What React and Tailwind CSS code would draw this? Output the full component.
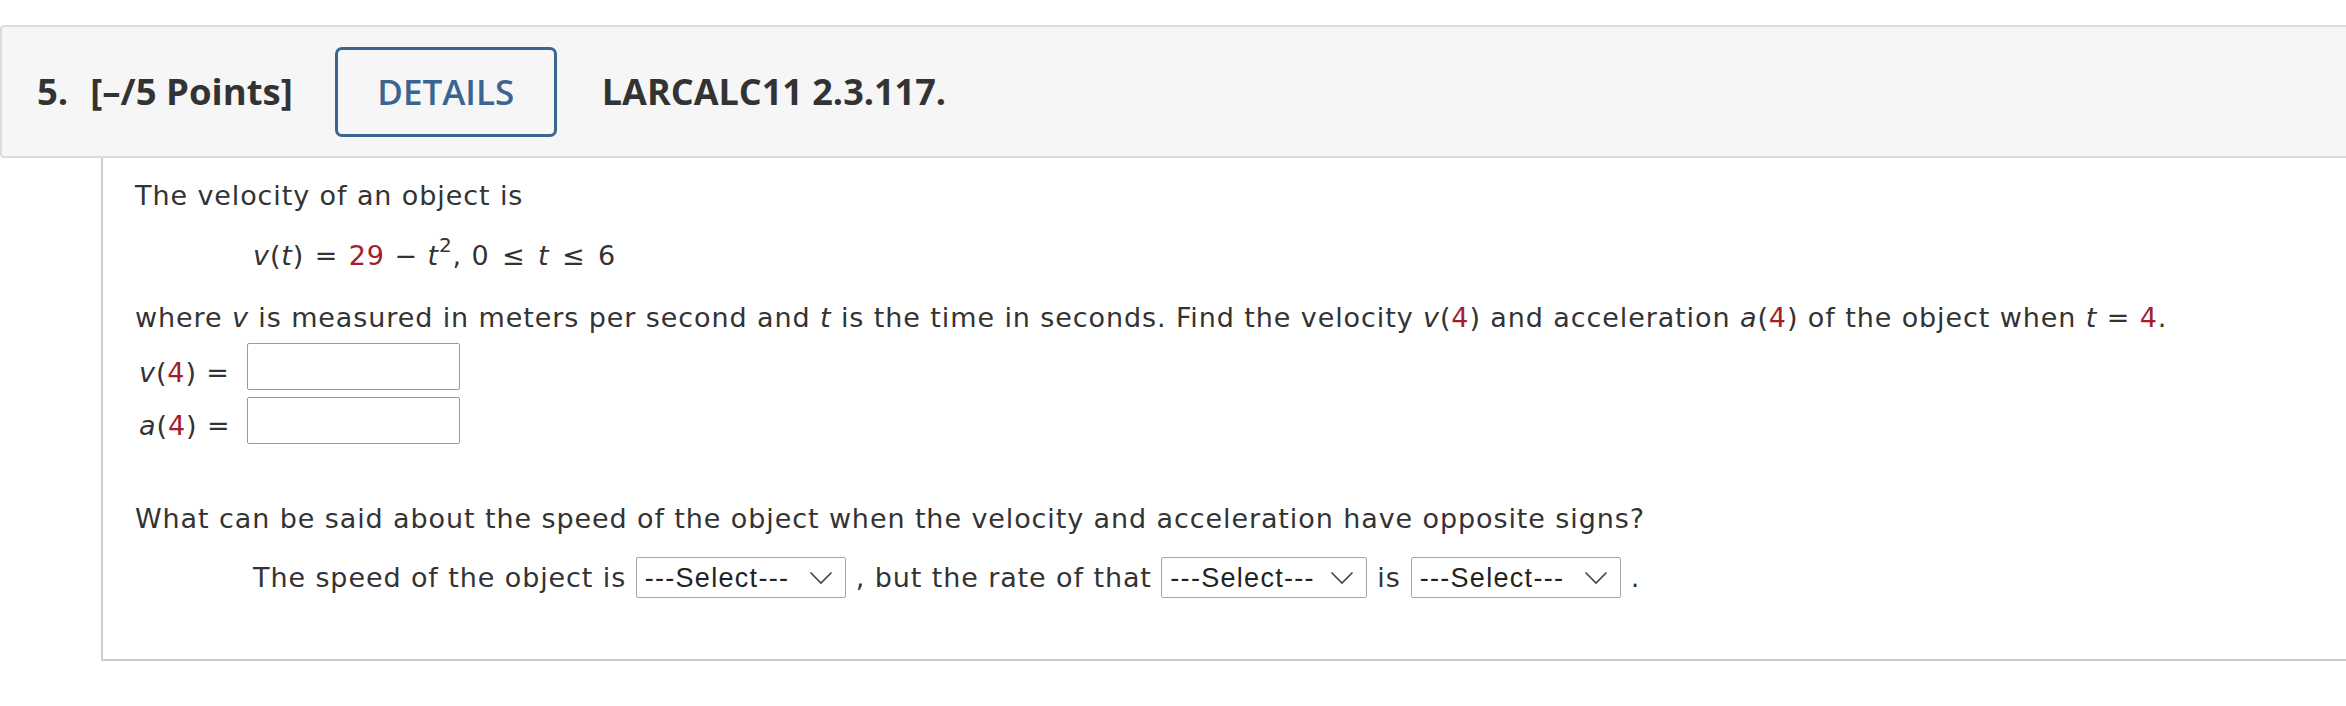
import React from "react";

const R = ({ children }) => <span className="text-[#a51d2d]">{children}</span>;
const I = ({ children }) => <span className="italic">{children}</span>;

function Chevron() {
  return (
    <svg className="absolute right-[13px] top-[14px] pointer-events-none" width="24" height="14" viewBox="0 0 24 14" fill="none">
      <path d="M1.5 1.5 L12 12 L22.5 1.5" stroke="#444" strokeWidth="1.6" />
    </svg>
  );
}

function Select({ w }) {
  return (
    <span className={`relative inline-block ${w} h-[41px]`}>
      <select
        className="appearance-none w-full h-full border-[1.5px] border-[#a6a6a6] rounded-[2px] bg-white pl-[8px] text-[27px] tracking-[1.3px] text-[#222] outline-none"
        style={{ fontFamily: '"Liberation Sans", Arial, sans-serif' }}
      >
        <option>---Select---</option>
      </select>
      <Chevron />
    </span>
  );
}

export default function App() {
  return (
    <div className="w-[2346px] h-[706px] bg-white overflow-hidden pt-[25px] text-[#333]">
      <div
        className="h-[133px] bg-[#f6f6f6] border-[2px] border-r-0 border-[#dcdcdc] rounded-l-[4px] flex items-center pl-[35px]"
        style={{ fontFamily: '"Open Sans", sans-serif' }}
      >
        <span className="text-[36.5px] font-bold text-[#333] leading-none">5.</span>
        <span className="text-[36.5px] font-bold text-[#333] leading-none ml-[22px]">[–/5 Points]</span>
        <div className="ml-[42px] w-[222px] h-[90px] border-[3px] border-[#3b6590] rounded-[7px] flex items-center justify-center">
          <span className="text-[35px] font-semibold text-[#3b6590] leading-none">DETAILS</span>
        </div>
        <span className="ml-[45px] text-[36px] font-bold text-[#333] leading-none">LARCALC11 2.3.117.</span>
      </div>

      <div
        className="ml-[101px] h-[503px] border-l-[2px] border-b-[2px] border-[#cccccc] pl-[32px] pt-[18px] text-[27px] leading-[40px] tracking-[0.9px] text-[#333]"
        style={{ fontFamily: '"DejaVu Sans", Verdana, sans-serif' }}
      >
        <div>The velocity of an object is</div>
        <div className="mt-[20px] pl-[118px] whitespace-pre">
          <I>v</I>(<I>t</I>) <span className="mx-[1px]">=</span> <R>29</R> − <I>t</I><sup className="text-[20px] relative -top-[13px]">2</sup>, 0 <span className="mx-[3px]">≤</span> <I>t</I> <span className="mx-[3px]">≤</span> 6
        </div>
        <div className="mt-[22px] whitespace-nowrap">
          where <I>v</I> is measured in meters per second and <I>t</I> is the time in seconds. Find the velocity <I>v</I>(<R>4</R>) and acceleration <I>a</I>(<R>4</R>) of the object when <I>t</I> = <R>4</R>.
        </div>
        <div className="mt-[5px] flex flex-col gap-[7px]">
          <div className="flex items-start h-[47px]">
            <span className="w-[112px] pl-[4px] pt-[10px] whitespace-pre"><I>v</I>(<R>4</R>) <span>=</span></span>
            <input className="w-[213px] h-[47px] border-[1.5px] border-[#9a9a9a] rounded-[2px] bg-white outline-none" />
          </div>
          <div className="flex items-start h-[47px]">
            <span className="w-[112px] pl-[4px] pt-[9px] whitespace-pre"><I>a</I>(<R>4</R>) <span>=</span></span>
            <input className="w-[213px] h-[47px] border-[1.5px] border-[#9a9a9a] rounded-[2px] bg-white outline-none" />
          </div>
        </div>
        <div className="mt-[55px] whitespace-nowrap">What can be said about the speed of the object when the velocity and acceleration have opposite signs?</div>
        <div className="mt-[18px] pl-[118px] flex items-center h-[41px] whitespace-pre">
          <span>The speed of the object is </span>
          <Select w="w-[210px]" />
          <span className="ml-[10px]">, but the rate of that </span>
          <Select w="w-[206px]" />
          <span className="mx-[10px]">is</span>
          <Select w="w-[210px]" />
          <span className="ml-[10px]">.</span>
        </div>
      </div>
    </div>
  );
}
